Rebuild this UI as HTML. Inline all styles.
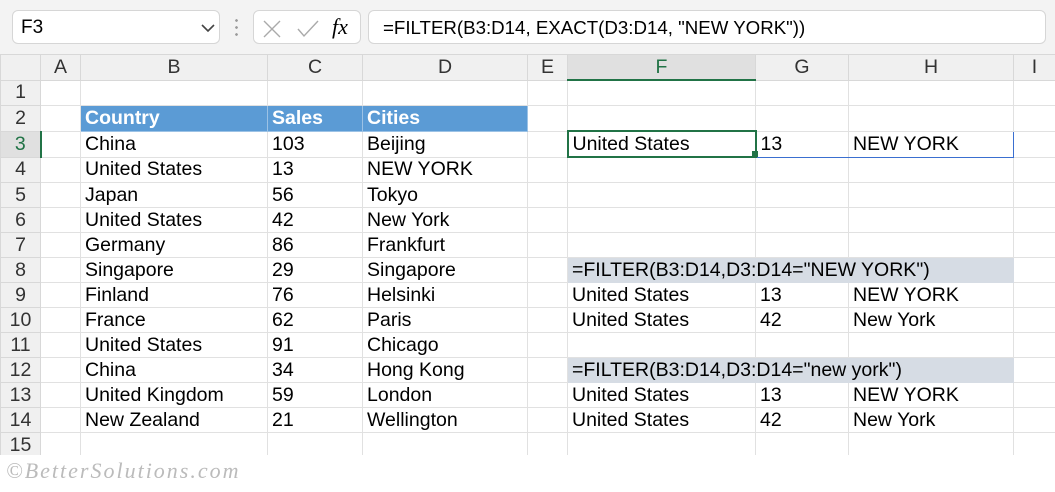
<!DOCTYPE html>
<html><head><meta charset="utf-8"><style>
body{margin:0;width:1055px;height:492px;background:#f3f3f3;font-family:"Liberation Sans",Arial,sans-serif;position:relative;overflow:hidden}
.box{position:absolute;background:#fff;border:1px solid #d6d6d6;border-radius:6px;box-sizing:border-box}
table{position:absolute;left:0;top:54px;width:1055px;border-collapse:collapse;table-layout:fixed;background:#fff}
td{height:24px;padding:0 0 0 4px;border:1px solid #e1e1e1;font-size:19.5px;color:#000;white-space:nowrap;overflow:visible;line-height:23px}
tr.h td{background:#f0f0f0;color:#333;text-align:center;padding:0;border-color:#d8d8d8}
td.r{background:#f0f0f0;color:#333;text-align:center;padding:0;border-color:#d8d8d8}
.bl{background:#5b9bd5;color:#fff;font-weight:bold;border-color:#9cc2e5}
.gr{background:#d6dce4;border-color:#d6dce4}
</style></head><body>
<div class="box" style="left:12px;top:10px;width:208px;height:34px"><span style="position:absolute;left:8px;top:6px;font-size:19px">F3</span>
<svg style="position:absolute;left:188px;top:12px" width="14" height="10"><path d="M1 2 L7 8 L13 2" stroke="#444" stroke-width="1.6" fill="none"/></svg></div>
<div style="position:absolute;left:235px;top:17px;width:3px;height:20px;background:radial-gradient(circle,#999 1.2px,transparent 1.5px) 0 0/3px 7px"></div>
<div class="box" style="left:253px;top:10px;width:108px;height:34px">
<svg style="position:absolute;left:8px;top:8px" width="90" height="20"><path d="M2 2 L18 18 M18 2 L2 18" stroke="#aaa" stroke-width="1.4"/><path d="M36 10 L42 17 L56 2" stroke="#aaa" stroke-width="1.4" fill="none"/></svg>
<span style="position:absolute;left:78px;top:3px;font-family:'Liberation Serif',serif;font-style:italic;font-size:22px">fx</span></div>
<div class="box" style="left:368px;top:10px;width:678px;height:34px"><span style="position:absolute;left:14px;top:6px;font-size:18.7px">=FILTER(B3:D14, EXACT(D3:D14, "NEW YORK"))</span></div>
<table>
<colgroup><col style="width:40px"><col style="width:40px"><col style="width:187px"><col style="width:95px"><col style="width:165px"><col style="width:40px"><col style="width:188px"><col style="width:93px"><col style="width:165px"><col style="width:42px"></colgroup>
<tr class="h"><td></td><td>A</td><td>B</td><td>C</td><td>D</td><td>E</td><td style="background:#e0e0e0;color:#217346;border-bottom:2px solid #217346">F</td><td>G</td><td>H</td><td>I</td></tr>
<tr><td class="r">1</td><td></td><td></td><td></td><td></td><td></td><td></td><td></td><td></td><td></td></tr>
<tr><td class="r">2</td><td></td><td class="bl">Country</td><td class="bl">Sales</td><td class="bl">Cities</td><td></td><td></td><td></td><td></td><td></td></tr>
<tr><td class="r" style="color:#217346;background:#e0e0e0;border-right:2px solid #217346">3</td><td></td><td>China</td><td>103</td><td>Beijing</td><td></td><td style="border:2px solid #217346">United States</td><td style="border-top:1px solid #3a6fd0;border-bottom:1px solid #3a6fd0">13</td><td style="border:1px solid #3a6fd0;border-left-color:#e1e1e1">NEW YORK</td><td></td></tr>
<tr><td class="r">4</td><td></td><td>United States</td><td>13</td><td>NEW YORK</td><td></td><td></td><td></td><td></td><td></td></tr>
<tr><td class="r">5</td><td></td><td>Japan</td><td>56</td><td>Tokyo</td><td></td><td></td><td></td><td></td><td></td></tr>
<tr><td class="r">6</td><td></td><td>United States</td><td>42</td><td>New York</td><td></td><td></td><td></td><td></td><td></td></tr>
<tr><td class="r">7</td><td></td><td>Germany</td><td>86</td><td>Frankfurt</td><td></td><td></td><td></td><td></td><td></td></tr>
<tr><td class="r">8</td><td></td><td>Singapore</td><td>29</td><td>Singapore</td><td></td><td class="gr">=FILTER(B3:D14,D3:D14="NEW YORK")</td><td class="gr"></td><td class="gr"></td><td></td></tr>
<tr><td class="r">9</td><td></td><td>Finland</td><td>76</td><td>Helsinki</td><td></td><td>United States</td><td>13</td><td>NEW YORK</td><td></td></tr>
<tr><td class="r">10</td><td></td><td>France</td><td>62</td><td>Paris</td><td></td><td>United States</td><td>42</td><td>New York</td><td></td></tr>
<tr><td class="r">11</td><td></td><td>United States</td><td>91</td><td>Chicago</td><td></td><td></td><td></td><td></td><td></td></tr>
<tr><td class="r">12</td><td></td><td>China</td><td>34</td><td>Hong Kong</td><td></td><td class="gr">=FILTER(B3:D14,D3:D14="new york")</td><td class="gr"></td><td class="gr"></td><td></td></tr>
<tr><td class="r">13</td><td></td><td>United Kingdom</td><td>59</td><td>London</td><td></td><td>United States</td><td>13</td><td>NEW YORK</td><td></td></tr>
<tr><td class="r">14</td><td></td><td>New Zealand</td><td>21</td><td>Wellington</td><td></td><td>United States</td><td>42</td><td>New York</td><td></td></tr>
<tr><td class="r">15</td><td></td><td></td><td></td><td></td><td></td><td></td><td></td><td></td><td></td></tr>
</table>
<div style="position:absolute;left:752px;top:151px;width:6px;height:6px;background:#217346"></div>
<div style="position:absolute;left:0;top:455px;width:1055px;height:37px;background:#fff"></div>
<div style="position:absolute;left:6px;top:458px;font-family:'Liberation Serif',serif;font-style:italic;font-size:22px;color:#bbb;letter-spacing:2px">©BetterSolutions.com</div>
</body></html>
